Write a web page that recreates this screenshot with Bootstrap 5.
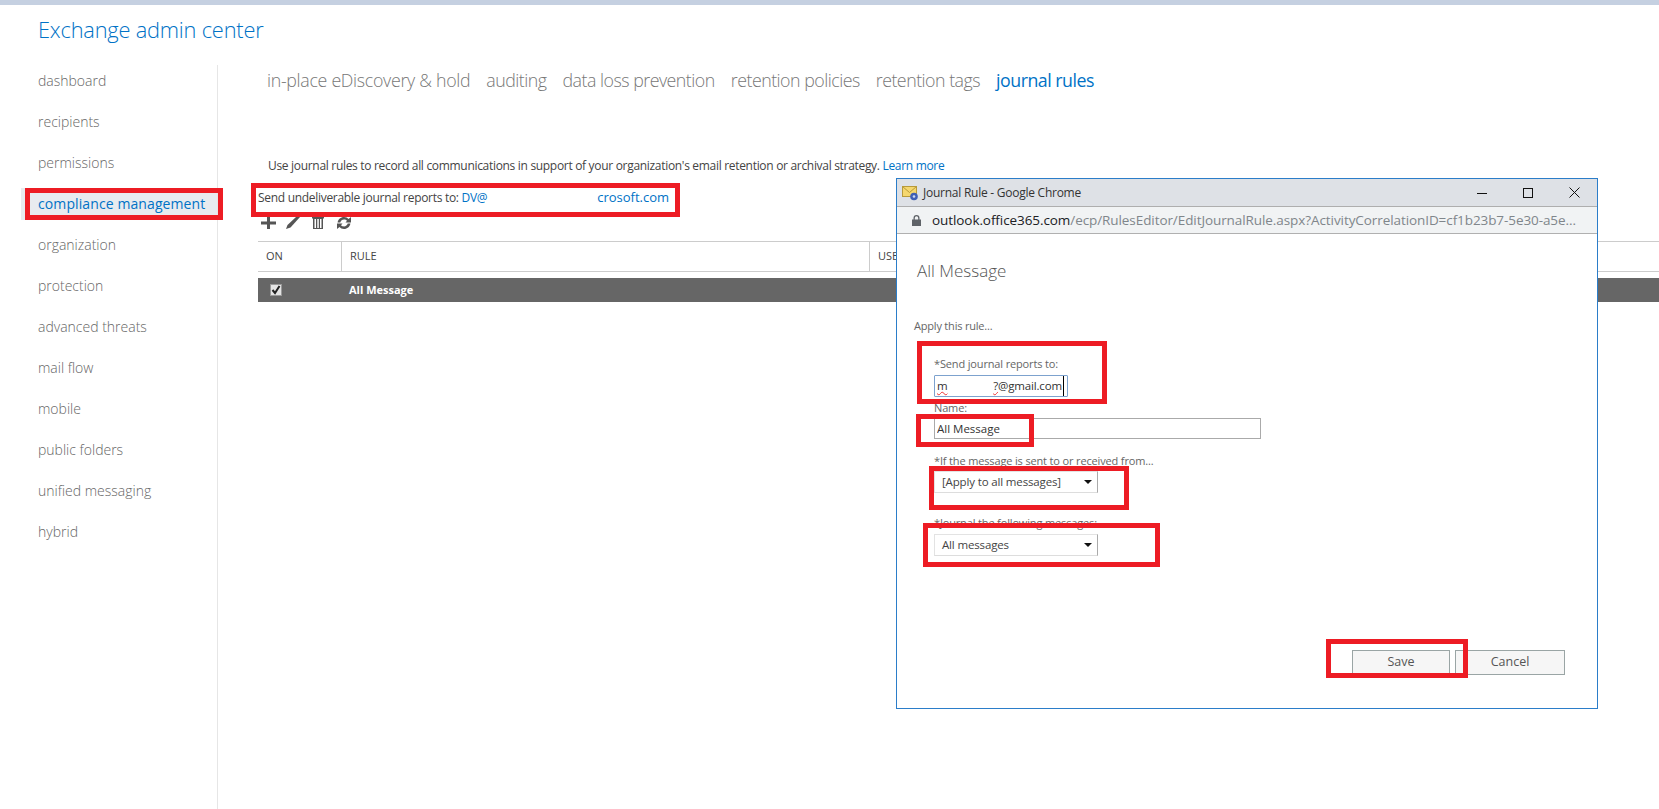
<!DOCTYPE html>
<html lang="en">
<head>
  <meta charset="UTF-8">
  <title>Exchange admin center</title>
  <link href="https://cdn.jsdelivr.net/npm/bootstrap@5.3.0/dist/css/bootstrap.min.css" rel="stylesheet">
  <style>
    body{font-family:"Open Sans","Liberation Sans",sans-serif;background:#fff;color:#333;overflow:hidden;height:809px}
    a{text-decoration:none;color:#0072c6}
    .top-strip{height:5px;background:#c5d0e1}
    .brand-line{height:60px;padding:11px 0 0 38px;margin:0}
    .brand-line a{font-size:21.8px;font-weight:300;line-height:28px;letter-spacing:-.2px;display:block}
    .shell{height:744px}
    .side-menu{width:218px;padding-left:21px;border-right:1px solid #e6e6e6;flex:none}
    .side-menu a{display:block;height:32px;line-height:32px;margin-bottom:9px;padding-left:17px;color:#666;font-size:14px;font-weight:300}
    .side-menu a.on{background:#e8ebef;color:#0072c6;font-weight:400;letter-spacing:.1px}
    .work{padding-left:40px;flex:1;min-width:0}
    .sub-tabs{margin-left:9px;gap:16px;height:30px;line-height:30px;font-size:17.8px;font-weight:300;letter-spacing:-.5px}
    .sub-tabs a{color:#777}
    .sub-tabs a:first-child{letter-spacing:-.3px}
    .sub-tabs a.on{color:#0072c6;font-weight:400}
    .intro{margin:62px 0 0 10px;font-size:12px;line-height:18px;letter-spacing:-.31px;color:#444}
    .undeliv{margin-top:13px;font-size:12px;line-height:18px;letter-spacing:-.3px;color:#444}
    .undeliv .hid{margin-left:110px;font-size:13px;letter-spacing:0}
    .tools{margin:10px 0 0 3px;height:12px}
    .tools svg{display:block;fill:#555}
    .tools svg+svg{margin-left:10px}
    .tools .wide-gap{margin-left:12px}
    .tools .wider-gap{margin-left:13px}
    .rules{margin:12px 0 0;table-layout:fixed;width:100%;font-size:11px;border-top:1px solid #ccc;border-collapse:separate;border-spacing:0}
    .rules .col-on{width:83px}
    .rules .col-rule{width:528px}
    .rules th{font-weight:400;height:30px;padding:0 8px;border-bottom:1px solid #ccc;color:#444;vertical-align:middle;background:#fff;box-shadow:none}
    .rules th+th{border-left:1px solid #ccc}
    .rules tbody::before{content:"";display:block;height:6px}
    .rules td{background:#666;color:#fff;height:24px;padding:0 8px;border:0;font-weight:700;vertical-align:middle;box-shadow:none;--bs-table-bg:#666;--bs-table-color:#fff}
    .rules .chk{display:block;margin-left:4px;width:12px;height:12px;background:#e4e4e4;border:1px solid #999}
    .popup{position:absolute;left:896px;top:178px;width:702px;height:531px;background:#fff;border:1px solid #2b7dc9;z-index:5}
    .popup-title{height:28px;background:#dee1e6;border-bottom:1px solid #aeaeae;padding-left:5px;font-size:12px;color:#333}
    .popup-title .name{margin-left:4px;letter-spacing:-.25px}
    .win-btn{width:46px;height:27px}
    .popup-url{height:27px;background:#f1f3f4;border-bottom:1px solid #b0b0b0;padding-left:15px;font-size:13.5px;color:#80868b;white-space:nowrap;letter-spacing:-.08px}
    .popup-url b{font-weight:400;color:#202124}
    .popup-url svg{margin-right:11px}
    .popup-body{padding:26px 0 0 17px;position:relative}
    .popup-body h2{font-size:17px;font-weight:300;color:#555;margin:0 0 0 3px;line-height:22px}
    .rule-lead{margin:36px 0 0;font-size:11px;line-height:16px;color:#666;letter-spacing:-.2px}
    .fld{margin-left:20px;font-size:11px;color:#666;line-height:14px;letter-spacing:-.15px}
    .gap-send{margin-top:23px}
    .gap-name{margin-top:4px}
    .gap-if{margin-top:15px}
    .gap-journal{margin-top:23px}
    .fake-input{width:134px;height:22px;border:1px solid #7da2ce;border-radius:1px;padding:0 0 0 2px;font-size:11.5px;line-height:20px;color:#333;margin-top:4px;white-space:nowrap}
    .fake-input .typo{text-decoration:underline wavy #e33 1px}
    .fake-input .end{border-right:1px solid #000;padding-right:1px;margin-right:3px}
    .name-box{width:327px;height:21px;border:1px solid #aaa;border-radius:0;padding:0 0 0 2px;font-size:11.5px;color:#333;margin-top:3px;box-shadow:none}
    .pick{width:164px;height:22px;border:1px solid #e3e3e3;border-right-color:#aaa;border-bottom-color:#ddd;border-radius:0;padding:0 0 0 7px;font-size:11.5px;color:#444;margin-top:3px;background:#fff}
    .pick.lower{margin-top:4px}
    .pick i{width:0;height:0;border-left:4px solid transparent;border-right:4px solid transparent;border-top:4px solid #111;margin-right:5px}
    .foot-btn{position:absolute;top:416px;height:25px;background:#f6f6f6;border:1px solid #9aa5a5;border-radius:0;font-size:12.5px;color:#555;padding:0}
    .foot-btn:hover{background:#f6f6f6;border-color:#9aa5a5}
    .btn-save{left:455px;width:98px}
    .btn-cancel{left:558px;width:110px}
    .mark-box{position:absolute;border:5px solid #ed1c24;z-index:9;pointer-events:none}
    .m1{left:25px;top:188px;width:198px;height:32px}
    .m2{left:251px;top:183px;width:429px;height:34px}
    .m3{left:917px;top:341px;width:190px;height:63px}
    .m4{left:916px;top:414px;width:118px;height:33px}
    .m5{left:929px;top:466px;width:200px;height:44px}
    .m6{left:923px;top:523px;width:237px;height:44px}
    .m7{left:1326px;top:639px;width:142px;height:39px}
  </style>
</head>
<body>
  <div class="top-strip"></div>
  <h1 class="brand-line"><a href="#">Exchange admin center</a></h1>

  <div class="shell d-flex">
    <!-- left menu -->
    <nav class="side-menu">
      <a href="#">dashboard</a>
      <a href="#">recipients</a>
      <a href="#">permissions</a>
      <a href="#" class="on">compliance management</a>
      <a href="#">organization</a>
      <a href="#">protection</a>
      <a href="#">advanced threats</a>
      <a href="#">mail flow</a>
      <a href="#">mobile</a>
      <a href="#">public folders</a>
      <a href="#">unified messaging</a>
      <a href="#">hybrid</a>
    </nav>

    <main class="work">
      <div class="sub-tabs d-flex">
        <a href="#">in-place eDiscovery &amp; hold</a>
        <a href="#">auditing</a>
        <a href="#">data loss prevention</a>
        <a href="#">retention policies</a>
        <a href="#">retention tags</a>
        <a href="#" class="on">journal rules</a>
      </div>
      <p class="intro mb-0">Use journal rules to record all communications in support of your organization's email retention or archival strategy. <a href="#">Learn more</a></p>
      <div class="undeliv">Send undeliverable journal reports to: <a href="#">DV@<span class="hid">crosoft.com</span></a></div>

      <div class="tools d-flex">
        <svg width="15" height="12" viewBox="0 0 15 12"><path d="M6 0h3v4.500h6v3H9V12H6V7.500H0v-3h6z"/></svg>
        <svg width="14" height="12" viewBox="0 0 14 12"><path d="M10 0l4 0-9.500 10.500L0 12l1.500-4z"/></svg>
        <svg class="wide-gap" width="12" height="12" viewBox="0 0 12 12"><path d="M0 0h12v1.500H11V12H1V1.500H0zM2.500 2v9h1.500V2zM5.300 2v9h1.500V2zM8 2v9h1.500V2z" fill-rule="evenodd"/></svg>
        <svg class="wider-gap" width="14" height="12" viewBox="0 0 14 12"><path d="M7 0c2 0 3.500.8 4.500 2L14 0v5.500H8.500l1.500-1.700C9.300 3 8.200 2.600 7 2.600 5.200 2.600 3.800 3.700 3.300 5.500H.6C1.200 2.300 3.700 0 7 0zM0 6.500h5.500L4 8.200c.7.800 1.800 1.200 3 1.200 1.800 0 3.200-1.100 3.700-2.900h2.700C12.800 9.700 10.300 12 7 12c-2 0-3.500-.8-4.500-2L0 12z"/></svg>
      </div>

      <table class="table rules mb-0">
        <colgroup><col class="col-on"><col class="col-rule"><col></colgroup>
        <thead><tr><th>ON</th><th>RULE</th><th>USER</th></tr></thead>
        <tbody><tr>
          <td><span class="chk"><svg width="10" height="10" viewBox="0 0 10 10" class="d-block"><path d="M1.500 5l2.500 3 4.500-7" fill="none" stroke="#222" stroke-width="2"/></svg></span></td>
          <td>All Message</td>
          <td></td>
        </tr></tbody>
      </table>
    </main>
  </div>

  <!-- browser popup -->
  <section class="popup">
    <div class="popup-title d-flex align-items-center">
      <svg width="17" height="16" viewBox="0 0 17 16"><rect x=".5" y="1.500" width="14" height="10" fill="#f5d76e" stroke="#b89a3a"/><path d="M.5 1.500l7 6 7-6" fill="none" stroke="#b89a3a"/><circle cx="12" cy="11.500" r="3.800" fill="#3f5fb5"/><circle cx="12" cy="11.500" r="1.300" fill="#cdd8f2"/></svg>
      <span class="name">Journal Rule - Google Chrome</span>
      <div class="ms-auto d-flex">
        <div class="win-btn d-flex align-items-center justify-content-center"><svg width="10" height="10" viewBox="0 0 10 10"><path d="M0 5.500h10" stroke="#111"/></svg></div>
        <div class="win-btn d-flex align-items-center justify-content-center"><svg width="10" height="10" viewBox="0 0 10 10"><rect x=".5" y=".5" width="9" height="9" fill="none" stroke="#111"/></svg></div>
        <div class="win-btn d-flex align-items-center justify-content-center"><svg width="11" height="11" viewBox="0 0 11 11"><path d="M.5.500l10 10M10.500.500l-10 10" stroke="#111"/></svg></div>
      </div>
    </div>
    <div class="popup-url d-flex align-items-center">
      <svg width="9" height="11" viewBox="0 0 9 11"><path d="M1.500 4.500V3a3 3 0 0 1 6 0v1.500h1.500V11H0V4.500zM2.800 4.500h3.400V3a1.700 1.700 0 0 0-3.400 0z" fill="#5f6368" fill-rule="evenodd"/></svg>
      <span><b>outlook.office365.com</b>/ecp/RulesEditor/EditJournalRule.aspx?ActivityCorrelationID=cf1b23b7-5e30-a5e...</span>
    </div>
    <div class="popup-body">
      <h2>All Message</h2>
      <p class="rule-lead">Apply this rule...</p>

      <div class="fld gap-send">*Send journal reports to:</div>
      <div class="fld"><div class="fake-input d-flex justify-content-between"><span class="typo">m</span><span class="end"><span class="typo">?</span>@gmail.com</span></div></div>

      <div class="fld gap-name">Name:</div>
      <div class="fld"><input class="form-control name-box" value="All Message"></div>

      <div class="fld gap-if">*If the message is sent to or received from...</div>
      <div class="fld"><div class="pick d-flex align-items-center justify-content-between">[Apply to all messages]<i></i></div></div>

      <div class="fld gap-journal">*Journal the following messages:</div>
      <div class="fld"><div class="pick lower d-flex align-items-center justify-content-between">All messages<i></i></div></div>

      <button class="btn foot-btn btn-save">Save</button>
      <button class="btn foot-btn btn-cancel">Cancel</button>
    </div>
  </section>

  <!-- red annotations -->
  <div class="mark-box m1"></div>
  <div class="mark-box m2"></div>
  <div class="mark-box m3"></div>
  <div class="mark-box m4"></div>
  <div class="mark-box m5"></div>
  <div class="mark-box m6"></div>
  <div class="mark-box m7"></div>

  <script src="https://cdn.jsdelivr.net/npm/bootstrap@5.3.0/dist/js/bootstrap.bundle.min.js"></script>
</body>
</html>
